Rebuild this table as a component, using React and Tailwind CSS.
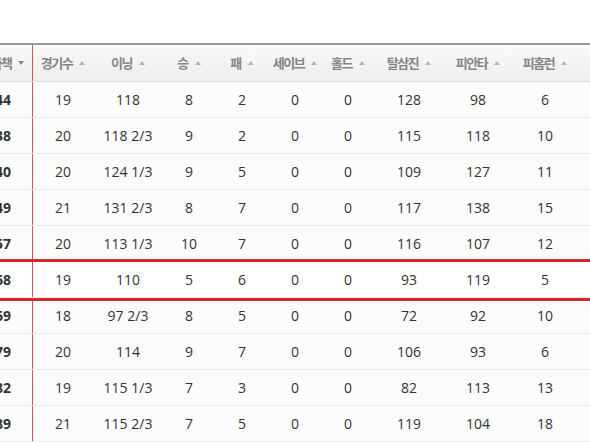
import React from 'react';

const COLS = ['평균자책', '경기수', '이닝', '승', '패', '세이브', '홀드', '탈삼진', '피안타', '피홈런', '피볼넷'];

const ROWS = [
    ['2.44', '19', '118', '8', '2', '0', '0', '128', '98', '6', '31'],
    ['3.38', '20', '118 2/3', '9', '2', '0', '0', '115', '118', '10', '28'],
    ['3.40', '20', '124 1/3', '9', '5', '0', '0', '109', '127', '11', '35'],
    ['3.49', '21', '131 2/3', '8', '7', '0', '0', '117', '138', '15', '30'],
    ['3.57', '20', '113 1/3', '10', '7', '0', '0', '116', '107', '12', '40'],
    ['3.68', '19', '110', '5', '6', '0', '0', '93', '119', '5', '33'],
    ['3.69', '18', '97 2/3', '8', '5', '0', '0', '72', '92', '10', '29'],
    ['3.79', '20', '114', '9', '7', '0', '0', '106', '93', '6', '38'],
    ['3.82', '19', '115 1/3', '7', '3', '0', '0', '82', '113', '13', '27'],
    ['3.89', '21', '115 2/3', '7', '5', '0', '0', '119', '104', '18', '36'],
];

const HIGHLIGHT = 5;

const grid = 'grid grid-cols-[71px_60px_70px_52px_54px_52px_54px_68px_70px_64px_70px]';

const Arrow = ({ down }) => (
    <svg width="6" height="4" viewBox="0 0 6 4" className="shrink-0">
        {down
            ? <path d="M0 0 L6 0 L3 4 Z" fill="#888" />
            : <path d="M0 4 L6 4 L3 0 Z" fill="#b5b5b5" />}
    </svg>
);

export default function App() {
    return (
        <div className="w-[590px] h-[442px] overflow-hidden bg-white pt-[43px] font-['Open_Sans','Noto_Sans_CJK_KR',sans-serif]">
            <div className="-ml-[38px] w-[720px]">
                {/* header */}
                <div className={`${grid} h-[39px] border-t-2 border-t-[#999] border-b border-b-[#dcdcdc] bg-gradient-to-b from-[#fafafa] to-[#ededed]`}>
                    {COLS.map((c, i) => (
                        <div
                            key={c}
                            className={`flex items-center justify-center gap-[7px] text-[13px] font-bold tracking-[-1.5px] text-[#858585] font-['Noto_Sans_CJK_KR',sans-serif] ${i === 0 ? 'border-r border-r-[#d45058]' : ''}`}
                        >
                            <span>{c}</span>
                            <Arrow down={i === 0} />
                        </div>
                    ))}
                </div>

                {/* body */}
                {ROWS.map((r, ri) => (
                    <div key={ri} className={`${grid} relative h-[36px] border-b border-b-[#ebebeb] ${ri === HIGHLIGHT ? 'bg-white' : 'bg-[#fcfcfc]'}`}>
                        {r.map((v, ci) => (
                            <div
                                key={ci}
                                className={`flex items-center justify-center text-[14px] text-[#333] ${ci === 0 ? 'font-bold text-[#222] border-r border-r-[#d45058]' : ''}`}
                            >
                                {v}
                            </div>
                        ))}
                        {ri === HIGHLIGHT && (
                            <div className="absolute z-10 left-0 right-0 -top-[3px] -bottom-[4px] border-y-[3px] border-[#d7262e] pointer-events-none" />
                        )}
                    </div>
                ))}
            </div>
        </div>
    );
}
